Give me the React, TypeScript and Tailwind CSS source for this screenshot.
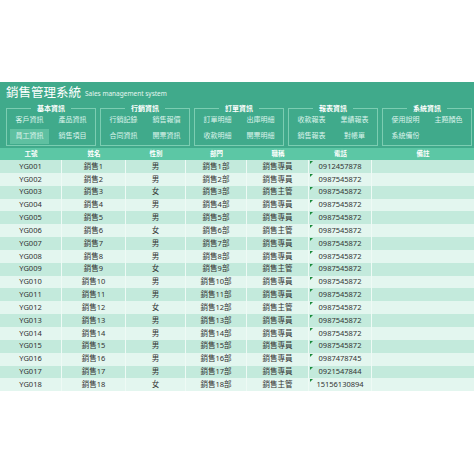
import React from "react";

const groups: { title: string; items: string[] }[] = [
  { title: "基本資訊", items: ["客戶資訊", "產品資訊", "員工資訊", "銷售項目"] },
  { title: "行銷資訊", items: ["行銷記錄", "銷售報價", "合同資訊", "開票資訊"] },
  { title: "訂單資訊", items: ["訂單明細", "出庫明細", "收款明細", "開票明細"] },
  { title: "報表資訊", items: ["收款報表", "業績報表", "銷售報表", "對帳單"] },
  { title: "系統資訊", items: ["使用說明", "主題顏色", "系統備份"] },
];

const rows = Array.from({ length: 18 }, (_, i) => {
  const n = i + 1;
  const female = [3, 6, 9, 12, 18].includes(n);
  const phones: Record<number, string> = {
    1: "0912457878",
    16: "0987478745",
    17: "0921547844",
    18: "15156130894",
  };
  return {
    id: "YG" + String(n).padStart(3, "0"),
    name: "銷售" + n,
    sex: female ? "女" : "男",
    dept: "銷售" + n + "部",
    title: female ? "銷售主管" : "銷售專員",
    phone: phones[n] ?? "0987545872",
  };
});

const cols = ["w-[62px]", "w-[64px]", "w-[60px]", "w-[61px]", "w-[62px]", "w-[63px]", "flex-1"];

export default function App() {
  return (
    <div
      className="w-[474px] h-[474px] bg-white pt-[82px] overflow-hidden"
      style={{ fontFamily: '"Noto Sans", "Noto Sans CJK TC", sans-serif' }}
    >
      <div className="bg-[#40aa8b] h-[66px] flex flex-col">
        <div className="flex items-center h-[22px] px-[6px] text-white">
          <span className="text-[12.5px] leading-none">銷售管理系統</span>
          <span className="text-[6.5px] leading-none ml-[4px] mt-[3px] text-[#e6f7f0]">Sales management system</span>
        </div>
        <div className="grid grid-cols-5 gap-[4px] pl-[6px] pr-[2px]">
          {groups.map((g) => (
            <fieldset key={g.title} className="border border-[#7ccdb2] h-[42px] px-[3px] pb-[2px] min-w-0">
              <legend className="mx-auto px-[6px] text-[7px] font-bold text-white leading-[9px]">{g.title}</legend>
              <div className="grid grid-cols-2 gap-x-[4px] gap-y-[1px]">
                {g.items.map((it) => (
                  <div
                    key={it}
                    className={
                      "h-[15px] flex items-center justify-center text-[7px] text-[#dcf4eb] " +
                      (it === "員工資訊" ? "bg-[#5fc0a1]" : "")
                    }
                  >
                    {it}
                  </div>
                ))}
              </div>
            </fieldset>
          ))}
        </div>
      </div>
      <div className="flex h-[12px] bg-[#5cc7a5] text-white font-bold text-[6.5px]">
        {["工號", "姓名", "性別", "部門", "職稱", "電話", "備註"].map((h, i) => (
          <div key={h} className={cols[i] + " flex items-center justify-center"}>
            {h}
          </div>
        ))}
      </div>
      {rows.map((r, idx) => (
        <div
          key={r.id}
          className={
            "flex h-[12.85px] text-[7.5px] text-[#333] " + (idx % 2 === 0 ? "bg-[#c3eadc]" : "bg-[#e3f6ef]")
          }
        >
          {[r.id, r.name, r.sex, r.dept, r.title, r.phone, ""].map((v, i) => (
            <div
              key={i}
              className={
                cols[i] +
                " relative flex items-center justify-center leading-none " +
                (i < 6 ? "border-r border-[#eefaf5]" : "")
              }
            >
              {i === 5 && (
                <span className="absolute left-[1px] top-[1px] w-0 h-0 border-t-[3px] border-r-[3px] border-t-[#1a8a3a] border-r-transparent" />
              )}
              {v}
            </div>
          ))}
        </div>
      ))}
    </div>
  );
}
